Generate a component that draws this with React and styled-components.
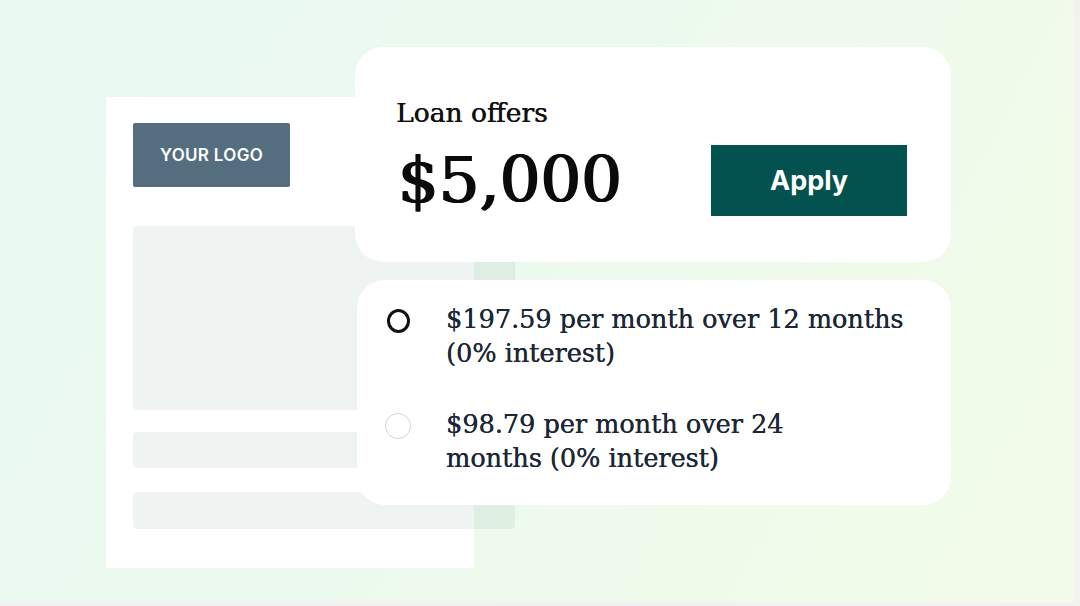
import styled, { createGlobalStyle } from 'styled-components';

const GlobalStyle = createGlobalStyle`
  html, body {
    margin: 0;
    padding: 0;
  }
  body {
    font-family: "DejaVu Serif", serif;
  }
`;

const serif = `"DejaVu Serif", "Liberation Serif", serif`;
const sans = `Inter, "Open Sans", sans-serif`;

const Stage = styled.div`
  background: linear-gradient(120deg, #e9f9f2 0%, #ecf9ee 45%, #f3fce8 100%);
  border-bottom: 4px solid #f1f2f1;
  border-right: 6px solid #f1f2f1;
  box-sizing: border-box;
  height: 606px;
  overflow: hidden;
  position: relative;
  width: 1080px;
`;

const PageMock = styled.div`
  background: #fff;
  box-sizing: border-box;
  display: flex;
  flex-direction: column;
  height: 471px;
  margin: 97px 0 0 106px;
  padding: 26px 0 0 27px;
  width: 368px;
`;

const Logo = styled.div`
  align-items: center;
  background: #546e7f;
  border-radius: 2px;
  color: #fff;
  display: flex;
  font-family: ${sans};
  font-size: 17px;
  font-weight: 600;
  height: 64px;
  justify-content: center;
  letter-spacing: 0.3px;
  width: 157px;
`;

const Placeholder = styled.div`
  background: rgba(95, 150, 140, 0.1);
  border-radius: 4px;
  flex: none;
  height: ${p => p.$h}px;
  margin-top: ${p => p.$gap}px;
  width: 382px;
`;

const Card = styled.div`
  background: #fff;
  border-radius: 28px;
  box-sizing: border-box;
  position: absolute;
`;

const OfferCard = styled(Card)`
  display: flex;
  flex-direction: column;
  height: 215px;
  left: 355px;
  padding: 50px 44px 0 41px;
  top: 47px;
  width: 596px;
`;

const Title = styled.div`
  color: #111;
  font-family: ${serif};
  font-size: 26.5px;
  line-height: 32px;
  text-shadow: 0.5px 0 0 #111;
`;

const AmountRow = styled.div`
  align-items: center;
  display: flex;
  justify-content: space-between;
  margin-top: 16px;
`;

const Amount = styled.div`
  color: #0b0b0b;
  font-family: ${serif};
  font-size: 64px;
  line-height: 71px;
  padding-left: 1px;
  text-shadow: 1px 0 0 #0b0b0b, 2px 0 0 #0b0b0b;
`;

const ApplyButton = styled.button`
  background: #03524f;
  border: none;
  border-radius: 0;
  color: #fff;
  cursor: pointer;
  font-family: ${sans};
  font-size: 27px;
  font-weight: 700;
  height: 71px;
  padding: 0;
  width: 196px;
`;

const OptionsCard = styled(Card)`
  display: flex;
  flex-direction: column;
  gap: 37px;
  height: 225px;
  left: 357px;
  padding: 22px 30px 0 28px;
  top: 280px;
  width: 594px;
`;

const Option = styled.label`
  align-items: flex-start;
  display: flex;
  gap: 35px;
`;

const RadioSlot = styled.span`
  display: flex;
  flex: none;
  justify-content: center;
  padding-top: 6px;
  width: 26px;
`;

const Radio = styled.span`
  border: ${p => (p.$checked ? '3.5px solid #111' : '1px solid #d4d4d4')};
  border-radius: 50%;
  box-sizing: border-box;
  height: ${p => (p.$checked ? 24 : 26)}px;
  margin-top: ${p => (p.$checked ? 1 : 0)}px;
  width: ${p => (p.$checked ? 23 : 26)}px;
`;

const OptionText = styled.span`
  color: #1b2736;
  font-family: ${serif};
  font-size: 25.5px;
  line-height: 34px;
  text-shadow: 0.3px 0 0 #1b2736;
`;

const options = [
  { id: 12, text: '$197.59 per month over 12 months (0% interest)', width: 470, checked: true },
  { id: 24, text: '$98.79 per month over 24 months (0% interest)', width: 370, checked: false },
];

const App = () => (
  <>
    <GlobalStyle />
    <Stage>
      <PageMock>
        <Logo>YOUR LOGO</Logo>
        <Placeholder $h={184} $gap={39} />
        <Placeholder $h={36} $gap={22} />
        <Placeholder $h={37} $gap={24} />
      </PageMock>
      <OfferCard>
        <Title>Loan offers</Title>
        <AmountRow>
          <Amount>$5,000</Amount>
          <ApplyButton>Apply</ApplyButton>
        </AmountRow>
      </OfferCard>
      <OptionsCard>
        {options.map(o => (
          <Option key={o.id}>
            <RadioSlot>
              <Radio $checked={o.checked} />
            </RadioSlot>
            <OptionText style={{ maxWidth: o.width }}>{o.text}</OptionText>
          </Option>
        ))}
      </OptionsCard>
    </Stage>
  </>
);

export default App;
